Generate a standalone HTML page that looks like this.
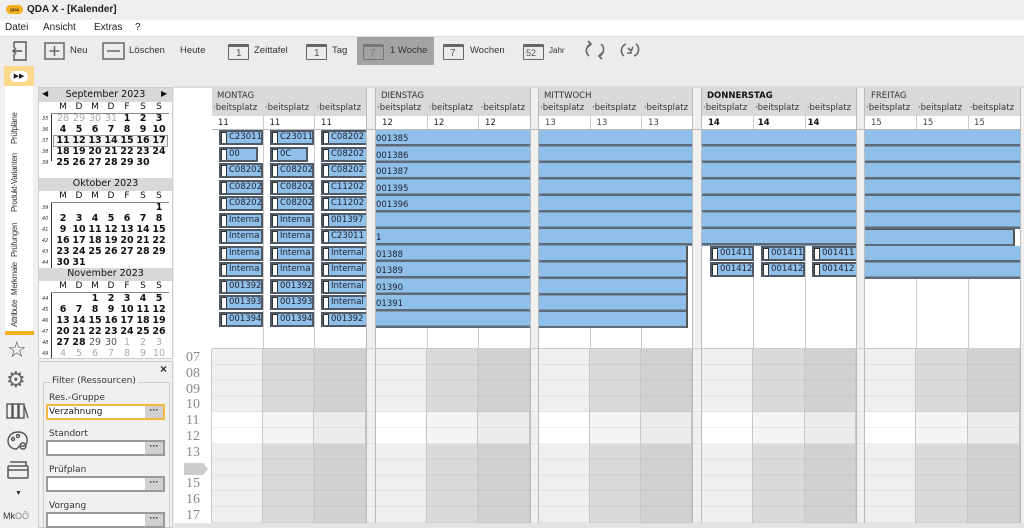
<!DOCTYPE html>
<html><head><meta charset="utf-8"><style>
*{margin:0;padding:0;box-sizing:border-box}
body{width:1024px;height:528px;overflow:hidden;background:#f0f0f0;font-family:"Liberation Sans","DejaVu Sans",sans-serif;position:relative;color:#222}
.a{position:absolute}
.t{font-size:10px;white-space:nowrap}
.tb{font-size:9.5px;white-space:nowrap;color:#333}
.cal{font-family:"DejaVu Sans",sans-serif;font-size:9.5px;font-weight:bold;color:#111}
.wk{position:absolute;left:0;width:134px;height:11px}
.wk span{position:absolute;width:16px;text-align:center}
.wn{position:absolute;left:3px;font-size:5px;font-weight:normal;color:#333;top:3px}
.g{color:#aaa;font-weight:normal}
.dh{font-family:"DejaVu Sans",sans-serif;font-size:8.5px;color:#333}
.bar{position:absolute;background:repeating-linear-gradient(to bottom,#8ec0e9 0,#8ec0e9 14.2px,#5f6a76 14.2px,#5f6a76 16.5px)}
.box{position:absolute;height:15px;background:#8ec0e9;border:2px solid #4f5a66;font-family:"DejaVu Sans",sans-serif;font-size:8.5px;color:#223;padding-left:8px;line-height:11px;overflow:hidden;white-space:nowrap}
.box:before{content:"";position:absolute;left:0;top:0;width:4px;height:11px;background:#fff;border:1px solid #333}
.bt{position:absolute;font-family:"DejaVu Sans",sans-serif;font-size:8.5px;color:#223;white-space:nowrap}
.hr{position:absolute;top:349px;height:174px;width:51px;border-right:1px solid #c8c8c8}
.inp{position:absolute;left:46px;width:119px;height:16px;background:#fff;border:2px solid #9a9a9a}
.inp b{position:absolute;right:0;top:0;width:18px;height:12px;background:#d0d0d0;font-size:9px;text-align:center;line-height:8px}
.lbl{position:absolute;left:49px;font-size:9px;color:#333;font-family:"DejaVu Sans",sans-serif}
.ic{position:absolute;border:1.5px solid #666;border-radius:1px}
.vt{position:absolute;left:10px;transform:rotate(-90deg);transform-origin:0 0;font-size:8px;letter-spacing:-0.3px;white-space:nowrap;color:#333;line-height:10px}
</style></head><body>
<!-- title -->
<div class="a" style="left:0;top:0;width:1024px;height:20px;background:#efefef"></div>
<div class="a" style="left:6px;top:5px;width:17px;height:9px;background:#f2b01e;border-radius:5px;font-size:4px;font-weight:bold;line-height:9px;text-align:center">QDA</div>
<div class="a" style="left:27px;top:4px;font-size:10px;font-weight:bold">QDA X - [Kalender]</div>
<div class="a" style="left:0;top:20px;width:1024px;height:16px;background:#fff"></div>
<div class="a t" style="left:5px;top:22px">Datei</div>
<div class="a t" style="left:43px;top:22px">Ansicht</div>
<div class="a t" style="left:94px;top:22px">Extras</div>
<div class="a t" style="left:135px;top:22px">?</div>
<div class="a" style="left:0;top:36px;width:1024px;height:50px;background:#ececec;border-top:1px solid #ddd"></div>
<!-- toolbar -->
<svg class="a" style="left:10px;top:40px" width="20" height="22" viewBox="0 0 20 22" fill="none" stroke="#555" stroke-width="1.4"><path d="M4 2h12v18H4V14M4 8V2"/><path d="M12 11H3M6 8l-3 3 3 3"/></svg>
<svg class="a" style="left:44px;top:42px" width="21" height="18" fill="none" stroke="#666" stroke-width="1.5"><rect x="1" y="1" width="19" height="16"/><path d="M10.5 4v10M5.5 9h10"/></svg>
<div class="a tb" style="left:70px;top:45px">Neu</div>
<svg class="a" style="left:102px;top:42px" width="23" height="18" fill="none" stroke="#666" stroke-width="1.5"><rect x="1" y="1" width="21" height="16"/><path d="M5 9h13"/></svg>
<div class="a tb" style="left:129px;top:45px">Löschen</div>
<div class="a tb" style="left:180px;top:45px">Heute</div>
<div class="ic" style="left:228px;top:44px;width:21px;height:16px;border-top-width:3px"></div><div class="a" style="left:236px;top:48px;font-size:10px;color:#555">1</div>
<div class="a tb" style="left:254px;top:45px">Zeittafel</div>
<div class="ic" style="left:306px;top:44px;width:21px;height:16px;border-top-width:3px"></div><div class="a" style="left:314px;top:48px;font-size:10px;color:#555">1</div>
<div class="a tb" style="left:332px;top:45px">Tag</div>
<div class="a" style="left:357px;top:37px;width:77px;height:28px;background:#a3a3a3"></div>
<div class="ic" style="left:363px;top:44px;width:21px;height:16px;border-top-width:3px;border-color:#777"></div><div class="a" style="left:370px;top:48px;font-size:10px;color:#777">7</div>
<div class="a tb" style="left:390px;top:45px">1 Woche</div>
<div class="ic" style="left:443px;top:44px;width:21px;height:16px;border-top-width:3px"></div><div class="a" style="left:450px;top:48px;font-size:10px;color:#555">7</div>
<div class="a tb" style="left:470px;top:45px">Wochen</div>
<div class="ic" style="left:523px;top:44px;width:21px;height:16px;border-top-width:3px"></div><div class="a" style="left:526px;top:48px;font-size:9px;color:#555">52</div>
<div class="a" style="left:549px;top:46px;font-size:8px;color:#333">Jahr</div>
<svg class="a" style="left:583px;top:40px" width="24" height="20" viewBox="0 0 24 20" fill="none" stroke="#666" stroke-width="1.6"><path d="M8 4A7 7 0 0 0 6 16M16 16A7 7 0 0 0 18 4"/><path d="M5 1l3 3-3 3M19 19l-3-3 3-3"/></svg>
<svg class="a" style="left:618px;top:40px" width="24" height="20" viewBox="0 0 24 20" fill="none" stroke="#666" stroke-width="1.6"><path d="M8 4A7 7 0 0 0 6 16M16 16A7 7 0 0 0 18 4"/><path d="M10 8l3 3 2-4M9 13h5"/></svg>
<div class="a" style="left:4px;top:66px;width:30px;height:20px;background:#fbd88a"></div>
<div class="a" style="left:10px;top:71px;width:18px;height:11px;background:#fff;border-radius:6px;font-size:7px;text-align:center;line-height:11px">▶▶</div>
<!-- left strip -->
<div class="a" style="left:0;top:86px;width:36px;height:442px;background:#f0f0f0"></div>
<div class="a" style="left:5px;top:86px;width:28px;height:245px;background:#fff"></div>
<div class="a" style="left:5px;top:331px;width:29px;height:4px;background:#f2b01e"></div>
<div class="vt" style="top:327px">Attribute</div>
<div class="vt" style="top:295px">Merkmale</div>
<div class="vt" style="top:257px">Prüfungen</div>
<div class="vt" style="top:212px">Produkt-Varianten</div>
<div class="vt" style="top:144px">Prüfpläne</div>
<div class="a" style="left:7px;top:337px;font-size:22px;color:#555">☆</div>
<div class="a" style="left:6px;top:367px;font-size:22px;color:#666">⚙</div>
<svg class="a" style="left:6px;top:402px" width="24" height="18" fill="none" stroke="#555" stroke-width="1.4"><rect x="1" y="2" width="5" height="14"/><rect x="7" y="2" width="5" height="14"/><rect x="13" y="2" width="5" height="14"/><path d="M18 3l4 13"/></svg>
<svg class="a" style="left:6px;top:430px" width="24" height="22" fill="none" stroke="#555" stroke-width="1.4"><path d="M12 2C5 2 2 7 2 11s3 8 8 8c2 0 2-3 4-3s6 1 7-4C22 6 18 2 12 2z"/><circle cx="7" cy="9" r="1.5"/><circle cx="12" cy="6" r="1.5"/><circle cx="17" cy="16" r="3"/></svg>
<svg class="a" style="left:6px;top:460px" width="24" height="20" fill="none" stroke="#555" stroke-width="1.5"><rect x="2" y="6" width="20" height="12" rx="1"/><path d="M2 10h20M4 2h16v4"/></svg>
<div class="a" style="left:15px;top:490px;font-size:7px;color:#333">▼</div>
<div class="a" style="left:3px;top:511px;font-size:9px;color:#333">Mk<span style="color:#888">ОŌ</span></div>
<!-- calendar panel -->
<div class="a cal" style="left:38px;top:87px;width:135px;height:272px;background:#fff;border:1px solid #ccc">
 <div class="a" style="left:0;top:0;width:133px;height:14px;background:#d8d8d8"></div>
 <div class="a" style="left:3px;top:1px;font-size:8px">◀</div><div class="a" style="left:122px;top:1px;font-size:8px">▶</div>
 <div class="a" style="left:0;top:1px;width:133px;text-align:center;font-weight:normal;font-size:9.5px">September 2023</div>
 <div class="a" style="left:0;top:90px;width:133px;height:13px;background:#d8d8d8;text-align:center;font-weight:normal;font-size:9.5px">Oktober 2023</div>
 <div class="a" style="left:0;top:180px;width:133px;height:13px;background:#d8d8d8;text-align:center;font-weight:normal;font-size:9.5px">November 2023</div>
 <div class="wk" style="top:14px;font-weight:normal;font-size:9px"><span style="left:16px">M</span><span style="left:32px">D</span><span style="left:48px">M</span><span style="left:64px">D</span><span style="left:80px">F</span><span style="left:96px">S</span><span style="left:112px">S</span></div>
 <div class="a" style="left:12px;top:25px;width:1px;height:48px;background:#333"></div><div class="a" style="left:12px;top:25px;width:118px;height:1px;background:#888"></div>
 <div class="wk" style="top:25px"><i class="wn">35</i><span class="g" style="left:16px">28</span><span class="g" style="left:32px">29</span><span class="g" style="left:48px">30</span><span class="g" style="left:64px">31</span><span style="left:80px">1</span><span style="left:96px">2</span><span style="left:112px">3</span></div>
 <div class="wk" style="top:36px"><i class="wn">36</i><span style="left:16px">4</span><span style="left:32px">5</span><span style="left:48px">6</span><span style="left:64px">7</span><span style="left:80px">8</span><span style="left:96px">9</span><span style="left:112px">10</span></div>
 <div class="a" style="left:14px;top:47px;width:115px;height:12px;border:1px solid #999;background:#f4f4f4"></div>
 <div class="wk" style="top:47px"><i class="wn">37</i><span style="left:16px">11</span><span style="left:32px">12</span><span style="left:48px">13</span><span style="left:64px">14</span><span style="left:80px">15</span><span style="left:96px">16</span><span style="left:112px">17</span></div>
 <div class="wk" style="top:58px"><i class="wn">38</i><span style="left:16px">18</span><span style="left:32px">19</span><span style="left:48px">20</span><span style="left:64px">21</span><span style="left:80px">22</span><span style="left:96px">23</span><span style="left:112px">24</span></div>
 <div class="wk" style="top:69px"><i class="wn">39</i><span style="left:16px">25</span><span style="left:32px">26</span><span style="left:48px">27</span><span style="left:64px">28</span><span style="left:80px">29</span><span style="left:96px">30</span></div>
 <div class="wk" style="top:103px;font-weight:normal;font-size:9px"><span style="left:16px">M</span><span style="left:32px">D</span><span style="left:48px">M</span><span style="left:64px">D</span><span style="left:80px">F</span><span style="left:96px">S</span><span style="left:112px">S</span></div>
 <div class="a" style="left:12px;top:114px;width:1px;height:66px;background:#333"></div><div class="a" style="left:12px;top:114px;width:118px;height:1px;background:#888"></div>
 <div class="wk" style="top:114px"><i class="wn">39</i><span style="left:112px">1</span></div>
 <div class="wk" style="top:125px"><i class="wn">40</i><span style="left:16px">2</span><span style="left:32px">3</span><span style="left:48px">4</span><span style="left:64px">5</span><span style="left:80px">6</span><span style="left:96px">7</span><span style="left:112px">8</span></div>
 <div class="wk" style="top:136px"><i class="wn">41</i><span style="left:16px">9</span><span style="left:32px">10</span><span style="left:48px">11</span><span style="left:64px">12</span><span style="left:80px">13</span><span style="left:96px">14</span><span style="left:112px">15</span></div>
 <div class="wk" style="top:147px"><i class="wn">42</i><span style="left:16px">16</span><span style="left:32px">17</span><span style="left:48px">18</span><span style="left:64px">19</span><span style="left:80px">20</span><span style="left:96px">21</span><span style="left:112px">22</span></div>
 <div class="wk" style="top:158px"><i class="wn">43</i><span style="left:16px">23</span><span style="left:32px">24</span><span style="left:48px">25</span><span style="left:64px">26</span><span style="left:80px">27</span><span style="left:96px">28</span><span style="left:112px">29</span></div>
 <div class="wk" style="top:169px"><i class="wn">44</i><span style="left:16px">30</span><span style="left:32px">31</span></div>
 <div class="wk" style="top:193px;font-weight:normal;font-size:9px"><span style="left:16px">M</span><span style="left:32px">D</span><span style="left:48px">M</span><span style="left:64px">D</span><span style="left:80px">F</span><span style="left:96px">S</span><span style="left:112px">S</span></div>
 <div class="a" style="left:12px;top:204px;width:1px;height:66px;background:#333"></div><div class="a" style="left:12px;top:204px;width:118px;height:1px;background:#888"></div>
 <div class="wk" style="top:205px"><i class="wn">44</i><span style="left:48px">1</span><span style="left:64px">2</span><span style="left:80px">3</span><span style="left:96px">4</span><span style="left:112px">5</span></div>
 <div class="wk" style="top:216px"><i class="wn">45</i><span style="left:16px">6</span><span style="left:32px">7</span><span style="left:48px">8</span><span style="left:64px">9</span><span style="left:80px">10</span><span style="left:96px">11</span><span style="left:112px">12</span></div>
 <div class="wk" style="top:227px"><i class="wn">46</i><span style="left:16px">13</span><span style="left:32px">14</span><span style="left:48px">15</span><span style="left:64px">16</span><span style="left:80px">17</span><span style="left:96px">18</span><span style="left:112px">19</span></div>
 <div class="wk" style="top:238px"><i class="wn">47</i><span style="left:16px">20</span><span style="left:32px">21</span><span style="left:48px">22</span><span style="left:64px">23</span><span style="left:80px">24</span><span style="left:96px">25</span><span style="left:112px">26</span></div>
 <div class="wk" style="top:249px"><i class="wn">48</i><span style="left:16px">27</span><span style="left:32px">28</span><span class="g" style="left:48px;color:#555">29</span><span class="g" style="left:64px;color:#555">30</span><span class="g" style="left:80px">1</span><span class="g" style="left:96px">2</span><span class="g" style="left:112px">3</span></div>
 <div class="wk" style="top:260px"><i class="wn">49</i><span class="g" style="left:16px">4</span><span class="g" style="left:32px">5</span><span class="g" style="left:48px">6</span><span class="g" style="left:64px">7</span><span class="g" style="left:80px">8</span><span class="g" style="left:96px">9</span><span class="g" style="left:112px">10</span></div>
</div>
<!-- filter -->
<div class="a" style="left:38px;top:361px;width:135px;height:167px;background:#f0f0f0;border:1px solid #ccc"></div>
<div class="a" style="left:160px;top:362px;font-size:12px;font-weight:bold;color:#333">×</div>
<div class="a" style="left:43px;top:382px;width:127px;height:146px;border:1px solid #ccc"></div>
<div class="a" style="left:50px;top:376px;background:#f0f0f0;padding:0 2px;font-size:9px;color:#333;font-family:'DejaVu Sans',sans-serif">Filter (Ressourcen)</div>
<div class="lbl" style="top:393px">Res.-Gruppe</div>
<div class="inp" style="top:404px;border-color:#f2b940"><span style="position:absolute;left:1px;top:1px;font-size:9px;font-family:'DejaVu Sans',sans-serif">Verzahnung</span><b>···</b></div>
<div class="lbl" style="top:429px">Standort</div>
<div class="inp" style="top:440px"><b>···</b></div>
<div class="lbl" style="top:465px">Prüfplan</div>
<div class="inp" style="top:476px"><b>···</b></div>
<div class="lbl" style="top:501px">Vorgang</div>
<div class="inp" style="top:512px"><b>···</b></div>
<!-- main area -->
<div class="a" style="left:174px;top:86px;width:850px;height:442px;background:#fff"></div>
<div class="a" style="left:174px;top:86px;width:850px;height:2px;background:#ddd"></div>
<div class="a" style="left:366px;top:88px;width:10px;height:435px;background:#f0f0f0;border-left:1px solid #bbb;border-right:1px solid #bbb"></div>
<div class="a" style="left:530px;top:88px;width:9px;height:435px;background:#f0f0f0;border-left:1px solid #bbb;border-right:1px solid #bbb"></div>
<div class="a" style="left:692px;top:88px;width:10px;height:435px;background:#f0f0f0;border-left:1px solid #bbb;border-right:1px solid #bbb"></div>
<div class="a" style="left:856px;top:88px;width:9px;height:435px;background:#f0f0f0;border-left:1px solid #bbb;border-right:1px solid #bbb"></div>
<div class="a" style="left:1020px;top:88px;width:4px;height:435px;background:#f0f0f0;border-left:1px solid #bbb"></div>
<div class="a" style="left:212px;top:88px;width:154px;height:28px;background:#d9d9d9"></div>
<div class="a" style="left:376px;top:88px;width:154px;height:28px;background:#d9d9d9"></div>
<div class="a" style="left:539px;top:88px;width:153px;height:28px;background:#d9d9d9"></div>
<div class="a" style="left:702px;top:88px;width:154px;height:28px;background:#d9d9d9"></div>
<div class="a" style="left:865px;top:88px;width:155px;height:28px;background:#d9d9d9"></div>
<div class="a dh" style="left:217px;top:91px">MONTAG</div>
<div class="a dh" style="left:381px;top:91px">DIENSTAG</div>
<div class="a dh" style="left:544px;top:91px">MITTWOCH</div>
<div class="a dh" style="left:707px;top:91px;font-weight:bold;color:#111">DONNERSTAG</div>
<div class="a dh" style="left:871px;top:91px">FREITAG</div>
<div class="a dh" style="left:213px;top:103px;word-spacing:5px">·beitsplatz ·beitsplatz ·beitsplatz</div>
<div class="a dh" style="left:377px;top:103px;word-spacing:5px">·beitsplatz ·beitsplatz ·beitsplatz</div>
<div class="a dh" style="left:540px;top:103px;word-spacing:5px">·beitsplatz ·beitsplatz ·beitsplatz</div>
<div class="a dh" style="left:703px;top:103px;word-spacing:5px">·beitsplatz ·beitsplatz ·beitsplatz</div>
<div class="a dh" style="left:866px;top:103px;word-spacing:5px">·beitsplatz ·beitsplatz ·beitsplatz</div>
<div class="a" style="left:263px;top:116px;width:1px;height:407px;background:#ccc"></div>
<div class="a" style="left:314px;top:116px;width:1px;height:407px;background:#ccc"></div>
<div class="a" style="left:427px;top:116px;width:1px;height:407px;background:#ccc"></div>
<div class="a" style="left:478px;top:116px;width:1px;height:407px;background:#ccc"></div>
<div class="a" style="left:590px;top:116px;width:1px;height:407px;background:#ccc"></div>
<div class="a" style="left:641px;top:116px;width:1px;height:407px;background:#ccc"></div>
<div class="a" style="left:753px;top:116px;width:1px;height:407px;background:#ccc"></div>
<div class="a" style="left:805px;top:116px;width:1px;height:407px;background:#ccc"></div>
<div class="a" style="left:916px;top:116px;width:1px;height:407px;background:#ccc"></div>
<div class="a" style="left:968px;top:116px;width:1px;height:407px;background:#ccc"></div>
<div class="a" style="left:212px;top:129px;width:808px;height:1px;background:#bbb"></div>
<div class="a dh" style="left:218px;top:118px;word-spacing:38px;color:#222">11 11 11</div>
<div class="a dh" style="left:382px;top:118px;word-spacing:38px;color:#222">12 12 12</div>
<div class="a dh" style="left:545px;top:118px;word-spacing:38px;color:#444">13 13 13</div>
<div class="a dh" style="left:708px;top:118px;word-spacing:35px;font-weight:bold;color:#111">14 14 14</div>
<div class="a dh" style="left:871px;top:118px;word-spacing:38px;color:#444">15 15 15</div>
<div class="a" style="left:184px;top:349px;width:28px;height:174px;background:#fff;border-right:1px solid #ccc"></div>
<div class="a" style="left:212px;top:348px;width:808px;height:1px;background:#ccc"></div>
<div class="a" style="left:186px;top:350px;font-family:'Liberation Serif',serif;font-size:14px;line-height:15.8px;color:#888">07<br>08<br>09<br>10<br>11<br>12<br>13<br>&nbsp;<br>15<br>16<br>17</div>
<div class="a" style="left:184px;top:463px;width:24px;height:12px;background:#ccc;clip-path:polygon(0 0,80% 0,100% 50%,80% 100%,0 100%)"></div>
<style>
.h1{background:linear-gradient(to bottom,#efefef 0,#efefef 63px,#fff 63px,#fff 95px,#efefef 95px)}
.h2{background:linear-gradient(to bottom,#dadada 0,#dadada 63px,#f4f4f4 63px,#f4f4f4 95px,#dadada 95px)}
.h3{background:linear-gradient(to bottom,#d1d1d1 0,#d1d1d1 63px,#ebebeb 63px,#ebebeb 95px,#d1d1d1 95px)}
.hl{position:absolute;top:349px;height:174px;background:repeating-linear-gradient(to bottom,transparent 0,transparent 14.8px,rgba(0,0,0,.05) 14.8px,rgba(0,0,0,.05) 15.8px)}
</style>
<div class="hr h1" style="left:212px"></div><div class="hr h2" style="left:263px"></div><div class="hr h3" style="left:314px;width:52px"></div>
<div class="hr h1" style="left:376px"></div><div class="hr h2" style="left:427px"></div><div class="hr h3" style="left:478px;width:52px"></div>
<div class="hr h1" style="left:539px"></div><div class="hr h2" style="left:590px"></div><div class="hr h3" style="left:641px;width:51px"></div>
<div class="hr h1" style="left:702px"></div><div class="hr h2" style="left:753px;width:52px"></div><div class="hr h3" style="left:805px"></div>
<div class="hr h1" style="left:865px"></div><div class="hr h2" style="left:916px;width:52px"></div><div class="hr h3" style="left:968px;width:52px"></div>
<div class="hl" style="left:212px;width:808px"></div>
<div class="a" style="left:174px;top:523px;width:850px;height:5px;background:#e4e4e4"></div>
<!-- bars -->
<div class="bar" style="left:376px;top:130px;width:154px;height:198px"></div>
<div class="bar" style="left:539px;top:130px;width:153px;height:115.5px"></div>
<div class="bar" style="left:539px;top:245.5px;width:149px;height:82.5px;border-right:2px solid #555"></div>
<div class="bar" style="left:702px;top:130px;width:154px;height:115.5px"></div>
<div class="bar" style="left:865px;top:130px;width:155px;height:99px"></div>
<div class="bar" style="left:865px;top:229px;width:150px;height:16.5px;border-right:2px solid #555;border-top:1px solid #555"></div>
<div class="bar" style="left:865px;top:245.5px;width:155px;height:33px"></div>
<div class="bt" style="left:376px;top:131px;line-height:16.5px">001385<br>001386<br>001387<br>001395<br>001396<br>&nbsp;<br>1<br>01388<br>01389<br>01390<br>01391</div>
<div class="box" style="left:219px;top:130px;width:44px">C23011</div>
<div class="box" style="left:219px;top:146.5px;width:39px">00</div>
<div class="box" style="left:219px;top:163px;width:44px">C08202</div>
<div class="box" style="left:219px;top:179.5px;width:44px">C08202</div>
<div class="box" style="left:219px;top:196px;width:44px">C08202</div>
<div class="box" style="left:219px;top:212.5px;width:44px">Interna</div>
<div class="box" style="left:219px;top:229px;width:44px">Interna</div>
<div class="box" style="left:219px;top:245.5px;width:44px">Interna</div>
<div class="box" style="left:219px;top:262px;width:44px">Interna</div>
<div class="box" style="left:219px;top:278.5px;width:44px">001392</div>
<div class="box" style="left:219px;top:295px;width:44px">001393</div>
<div class="box" style="left:219px;top:311.5px;width:44px">001394</div>
<div class="box" style="left:270px;top:130px;width:44px">C23011</div>
<div class="box" style="left:270px;top:146.5px;width:38px">0C</div>
<div class="box" style="left:270px;top:163px;width:44px">C08202</div>
<div class="box" style="left:270px;top:179.5px;width:44px">C08202</div>
<div class="box" style="left:270px;top:196px;width:44px">C08202</div>
<div class="box" style="left:270px;top:212.5px;width:44px">Interna</div>
<div class="box" style="left:270px;top:229px;width:44px">Interna</div>
<div class="box" style="left:270px;top:245.5px;width:44px">Interna</div>
<div class="box" style="left:270px;top:262px;width:44px">Interna</div>
<div class="box" style="left:270px;top:278.5px;width:44px">001392</div>
<div class="box" style="left:270px;top:295px;width:44px">001393</div>
<div class="box" style="left:270px;top:311.5px;width:44px">001394</div>
<div class="box" style="left:321px;top:130px;width:45px;border-right:0">C08202</div>
<div class="box" style="left:321px;top:146.5px;width:45px;border-right:0">C08202</div>
<div class="box" style="left:321px;top:163px;width:45px;border-right:0">C08202</div>
<div class="box" style="left:321px;top:179.5px;width:45px;border-right:0">C11202</div>
<div class="box" style="left:321px;top:196px;width:45px;border-right:0">C11202</div>
<div class="box" style="left:321px;top:212.5px;width:45px;border-right:0">001397</div>
<div class="box" style="left:321px;top:229px;width:45px;border-right:0">C23011</div>
<div class="box" style="left:321px;top:245.5px;width:45px;border-right:0">Internal</div>
<div class="box" style="left:321px;top:262px;width:45px;border-right:0">Internal</div>
<div class="box" style="left:321px;top:278.5px;width:45px;border-right:0">Internal</div>
<div class="box" style="left:321px;top:295px;width:45px;border-right:0">Internal</div>
<div class="box" style="left:321px;top:311.5px;width:45px;border-right:0">001392</div>
<div class="box" style="left:710px;top:245.5px;width:44px">001411</div>
<div class="box" style="left:710px;top:262px;width:44px">001412</div>
<div class="box" style="left:761px;top:245.5px;width:44px">001411</div>
<div class="box" style="left:761px;top:262px;width:44px">001412</div>
<div class="box" style="left:812px;top:245.5px;width:44px;border-right:0">001411</div>
<div class="box" style="left:812px;top:262px;width:44px;border-right:0">001412</div>
</body></html>
